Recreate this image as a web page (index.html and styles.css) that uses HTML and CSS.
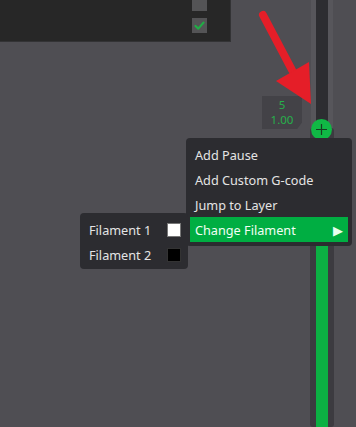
FILE: index.html
```html
<!DOCTYPE html>
<html>
<head>
<meta charset="utf-8">
<link rel="stylesheet" href="styles.css">
</head>
<body>
<div class="scene">
  <div class="panel">
    <div class="checks">
      <span class="cb"></span>
      <span class="cb checked">
        <svg width="15" height="15" viewBox="0 0 15 15"><path d="M3.5 8 L6.3 10.6 L11.5 4.6" fill="none" stroke="#1fae45" stroke-width="2.2" stroke-linecap="round" stroke-linejoin="round"/></svg>
      </span>
    </div>
  </div>

  <div class="slider">
    <div class="track-top"><div class="inner-dark"></div></div>
    <div class="track-bottom"><div class="inner-green"></div></div>
    <div class="thumb">
      <svg width="21" height="21" viewBox="0 0 21 21"><path d="M10.5 5 V16 M5 10.5 H16" stroke="#173d22" stroke-width="1.2"/></svg>
    </div>
  </div>

  <div class="label">
    <span class="ln">5</span>
    <span class="ln">1.00</span>
  </div>

  <svg class="arrow" width="356" height="140" viewBox="0 0 356 140">
    <line x1="263" y1="15" x2="292" y2="70" stroke="#e51e28" stroke-width="8" stroke-linecap="round"/>
    <polygon points="276,81 309,62 311,104" fill="#e51e28"/>
  </svg>

  <div class="menu">
    <div class="item">Add Pause</div>
    <div class="item">Add Custom G-code</div>
    <div class="item">Jump to Layer</div>
    <div class="item active"><span>Change Filament</span><span class="tri">&#9654;</span></div>
  </div>

  <div class="submenu">
    <div class="sitem"><span>Filament 1</span><span class="swatch white"></span></div>
    <div class="sitem"><span>Filament 2</span><span class="swatch black"></span></div>
  </div>
</div>
</body>
</html>
```

FILE: styles.css
```css
* { box-sizing: border-box; }
html, body {
  margin: 0;
  padding: 0;
  background: #4f4e53;
}
body {
  width: 356px;
  height: 427px;
  overflow: hidden;
  font-family: "Noto Sans", "Open Sans", sans-serif;
}
.scene {
  position: relative;
  width: 356px;
  height: 427px;
}
.panel {
  position: absolute;
  left: 0;
  top: 0;
  width: 231px;
  height: 42px;
  background: #272727;
  border-right: 1px solid #333335;
  border-bottom: 1px solid #333335;
}
.checks {
  position: absolute;
  left: 192px;
  top: -4px;
  display: flex;
  flex-direction: column;
  gap: 7px;
}
.cb {
  display: block;
  width: 15px;
  height: 15px;
  background: #545456;
}
.cb svg { display: block; }

.slider {
  position: absolute;
  left: 310px;
  top: 0;
  width: 24px;
  height: 427px;
  display: flex;
  flex-direction: column;
}
.track-top {
  height: 128px;
  display: flex;
  justify-content: center;
  background: linear-gradient(to right, transparent 1px, #57565b 1px, #57565b 23px, transparent 23px);
}
.inner-dark {
  width: 12px;
  background: #2d2d31;
}
.track-bottom {
  flex: 1;
  display: flex;
  justify-content: center;
  background: #3c3b40;
  border-radius: 3px;
}
.inner-green {
  width: 12px;
  background: #0cb043;
}
.thumb {
  position: absolute;
  left: 1px;
  top: 119px;
  width: 21px;
  height: 21px;
  border-radius: 50%;
  background: #10b845;
}
.thumb svg { display: block; }

.label {
  position: absolute;
  left: 262px;
  top: 96px;
  width: 40px;
  height: 33px;
  background: #434247;
  clip-path: polygon(0 0, 100% 0, 100% 80%, 88% 100%, 0 100%);
  display: flex;
  flex-direction: column;
  align-items: center;
  justify-content: center;
  gap: 1px;
  color: #27b04b;
  font-size: 11.5px;
}
.ln {
  display: block;
  line-height: 14px;
  height: 14px;
}

.arrow {
  position: absolute;
  left: 0;
  top: 0;
}

.menu {
  position: absolute;
  left: 186px;
  top: 138px;
  width: 166px;
  padding: 4px;
  background: #2c2c30;
  border-radius: 4px;
  display: flex;
  flex-direction: column;
}
.item {
  height: 25px;
  display: flex;
  align-items: center;
  justify-content: space-between;
  padding: 0 5px 0 5px;
  color: #e4e4e4;
  font-size: 12.7px;
}
.item.active {
  background: #00ae42;
  color: #f2fff5;
}
.tri {
  font-size: 13px;
  color: #e8fff0;
}

.submenu {
  position: absolute;
  left: 80px;
  top: 213px;
  width: 108px;
  padding: 4px 0 2px 0;
  background: #2c2c30;
  border-radius: 4px;
  display: flex;
  flex-direction: column;
}
.sitem {
  height: 25px;
  display: flex;
  align-items: center;
  justify-content: space-between;
  padding: 0 7px 0 9px;
  color: #e4e4e4;
  font-size: 12.7px;
}
.swatch {
  width: 14px;
  height: 14px;
  border: 1px solid #777;
}
.swatch.white { background: #ffffff; }
.swatch.black { background: #000000; border-color: #333; }
```
